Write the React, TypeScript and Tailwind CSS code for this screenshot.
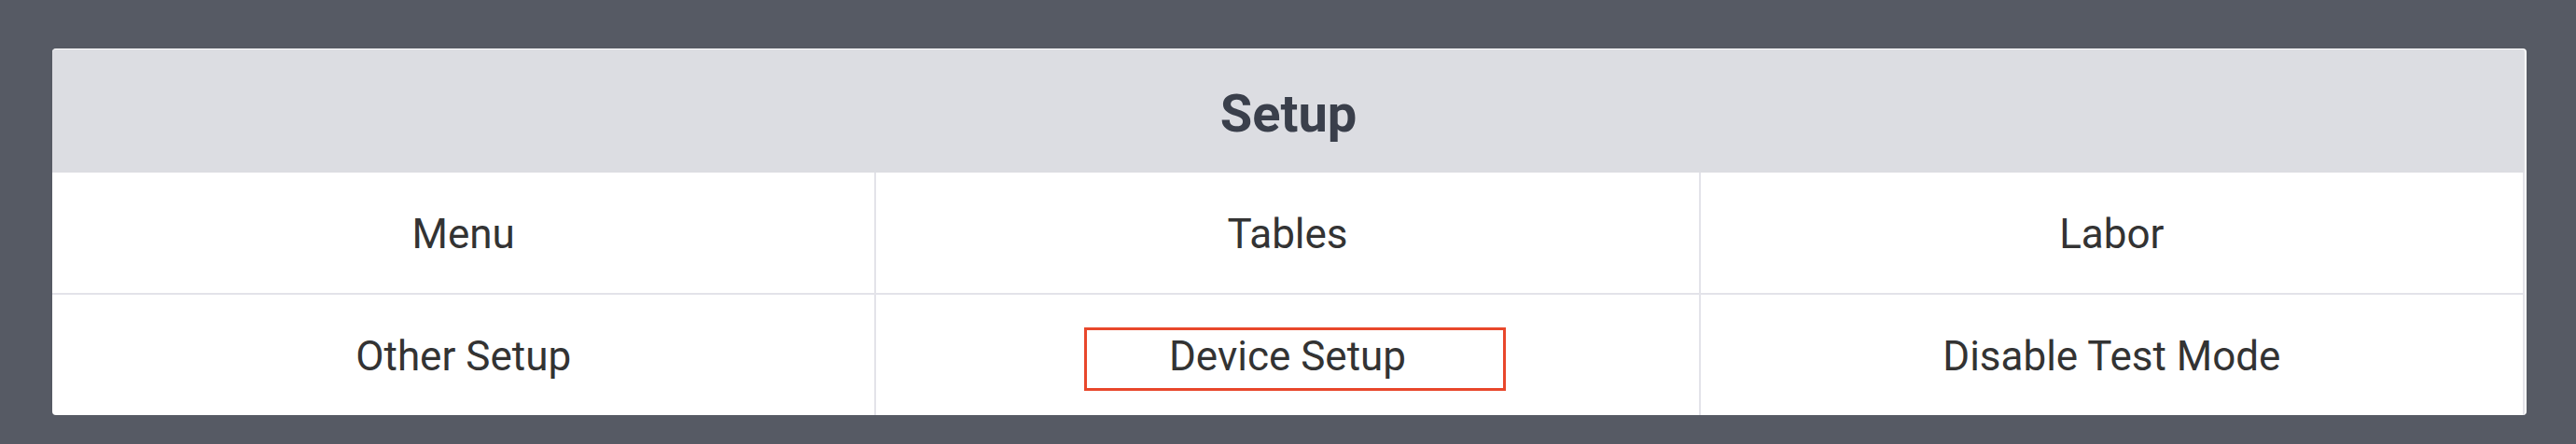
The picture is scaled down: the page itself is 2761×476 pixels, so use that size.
import React from 'react';

const rows: string[][] = [
  ['Menu', 'Tables', 'Labor'],
  ['Other Setup', 'Device Setup', 'Disable Test Mode'],
];

export default function App() {
  return (
    <div
      className="w-[2761px] h-[476px] bg-[#565a64] pt-[52px] pl-[56px]"
      style={{ fontFamily: 'Roboto, "Liberation Sans", sans-serif' }}
    >
      <div className="w-[2652px] bg-white rounded-[4px] border-t border-r-2 border-white overflow-hidden">
        {/* Header */}
        <div className="h-[132px] bg-[#dcdde2] flex items-center justify-center pt-[6px]">
          <h1 className="text-[56px] font-bold text-[#3a3f4b] leading-none">Setup</h1>
        </div>

        {/* Options grid */}
        {rows.map((row, ri) => (
          <div
            key={ri}
            className={`grid grid-cols-3 ${ri === 0 ? 'h-[131px] border-b-2 border-[#e3e3e9]' : 'h-[129px]'}`}
          >
            {row.map((label) => (
              <div
                key={label}
                className="flex items-center justify-center border-r-2 border-[#e3e3e9] pt-[2px]"
              >
                {label === 'Device Setup' ? (
                  <span className="relative text-[44px] text-[#333333] leading-none">
                    {label}
                    <span className="absolute left-[-91px] right-[-107px] top-[-9px] bottom-[-15px] border-[3px] border-[#e8472b]"></span>
                  </span>
                ) : (
                  <span className="text-[44px] text-[#333333] leading-none">{label}</span>
                )}
              </div>
            ))}
          </div>
        ))}
      </div>
    </div>
  );
}
